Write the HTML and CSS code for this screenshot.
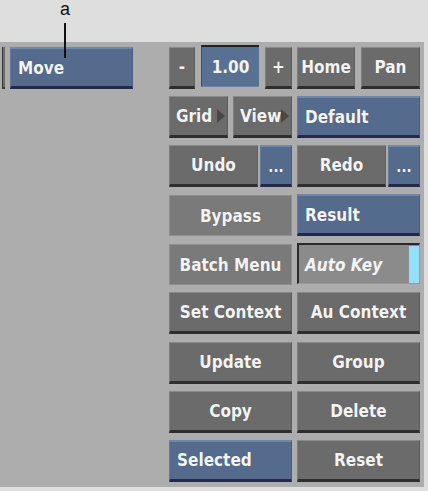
FILE: index.html
```html
<!DOCTYPE html>
<html>
<head>
<meta charset="utf-8">
<link rel="stylesheet" href="styles.css">
</head>
<body>
<div class="page">
  <div class="top">
    <span class="callout-label">a</span>
    <span class="callout-line"></span>
  </div>
  <div class="panel">
    <div class="left">
      <div class="stub"></div>
      <div class="btn blue left-text move">Move</div>
    </div>
    <div class="grid">
      <div class="row">
        <div class="half">
          <div class="btn gray w26">-</div>
          <div class="field w58">1.00</div>
          <div class="btn gray w27">+</div>
        </div>
        <div class="half">
          <div class="btn gray w58">Home</div>
          <div class="btn gray w59">Pan</div>
        </div>
      </div>
      <div class="row">
        <div class="half g5">
          <div class="btn gray w59 menu"><span>Grid</span><i class="arrow"></i></div>
          <div class="btn gray w59 menu"><span>View</span><i class="arrow"></i></div>
        </div>
        <div class="btn blue left-text">Default</div>
      </div>
      <div class="row">
        <div class="half g2">
          <div class="btn gray grow">Undo</div>
          <div class="btn blue w32 dots">...</div>
        </div>
        <div class="half g2">
          <div class="btn gray grow">Redo</div>
          <div class="btn blue w32 dots">...</div>
        </div>
      </div>
      <div class="row">
        <div class="btn flat">Bypass</div>
        <div class="btn blue left-text">Result</div>
      </div>
      <div class="row">
        <div class="btn flat">Batch Menu</div>
        <div class="autokey"><span>Auto Key</span><i class="cyan"></i></div>
      </div>
      <div class="row">
        <div class="btn gray">Set Context</div>
        <div class="btn gray">Au Context</div>
      </div>
      <div class="row">
        <div class="btn gray">Update</div>
        <div class="btn gray">Group</div>
      </div>
      <div class="row">
        <div class="btn gray">Copy</div>
        <div class="btn gray">Delete</div>
      </div>
      <div class="row">
        <div class="btn blue left-text">Selected</div>
        <div class="btn gray">Reset</div>
      </div>
    </div>
  </div>
</div>
</body>
</html>
```

FILE: styles.css
```css
html, body {
  margin: 0;
  padding: 0;
  background: #dedede;
}
.page {
  width: 428px;
  height: 491px;
  background: #dedede;
  font-family: "DejaVu Sans Condensed", "DejaVu Sans", "Liberation Sans", sans-serif;
  font-stretch: condensed;
}
.top {
  position: relative;
  height: 42px;
}
.callout-label {
  position: absolute;
  left: 60px;
  top: -1px;
  font-family: "Liberation Sans", Arial, sans-serif;
  font-stretch: normal;
  font-size: 18px;
  color: #111;
}
.callout-line {
  position: absolute;
  left: 64px;
  top: 23px;
  width: 2px;
  height: 35px;
  background: #111;
  z-index: 2;
}
.panel {
  width: 424px;
  height: 445px;
  background: #adadad;
  box-sizing: border-box;
  padding: 5px 4px 0 2px;
  display: flex;
  gap: 36px;
}
.left {
  display: flex;
  gap: 5px;
  align-items: flex-start;
}
.stub {
  width: 2px;
  height: 40px;
  background: #6c6c6c;
  border-left: 1px solid #3a3a3a;
  border-bottom: 2px solid #3a3a3a;
}
.move {
  width: 123px;
  height: 43px;
}
.grid {
  display: flex;
  flex-direction: column;
  gap: 7.1px;
  width: 251px;
}
.row {
  display: grid;
  grid-template-columns: 123px 123px;
  gap: 5px;
  height: 42px;
}
.half {
  display: flex;
  gap: 6px;
}
.half.g5 { gap: 5px; }
.half.g2 { gap: 2px; }
.btn {
  box-sizing: border-box;
  height: 42px;
  display: flex;
  align-items: center;
  justify-content: center;
  color: #f4f4f4;
  font-weight: bold;
  font-size: 17px;
  white-space: nowrap;
  text-shadow: 0 0 1px rgba(0,0,0,0.25);
}
.gray {
  background: #6b6b6b;
  border-top: 1px solid #8a8a8a;
  border-left: 1px solid #7c7c7c;
  border-right: 1px solid #5e5e5e;
  border-bottom: 3px solid #2e2e2e;
}
.blue {
  background: #546b8d;
  border-top: 2px solid #6f87a8;
  border-left: 1px solid #62799b;
  border-right: 1px solid #4a5f80;
  border-bottom: 3px solid #24284a;
}
.flat {
  background: #7a7a7a;
  border: 1px solid #8f8f8f;
  height: 41px;
  margin-top: 1px;
}
.left-text {
  justify-content: flex-start;
  padding-left: 7px;
}
.field {
  box-sizing: border-box;
  height: 42px;
  margin-top: -2px;
  background: #587092;
  border-top: 2px solid #222;
  border-left: 1px solid #3d4d66;
  border-bottom: 1px solid #6d84a4;
  display: flex;
  align-items: center;
  justify-content: center;
  color: #f4f4f4;
  font-weight: bold;
  font-size: 17px;
}
.w26 { width: 26px; }
.w27 { width: 27px; }
.w32 { width: 32px; }
.w58 { width: 58px; }
.w59 { width: 59px; }
.grow { flex: 1; }
.dots {
  align-items: flex-end;
  padding-bottom: 8px;
  font-size: 15px;
}
.menu {
  justify-content: space-between;
  padding-left: 6px;
  padding-right: 2px;
}
.arrow {
  width: 0;
  height: 0;
  border-top: 7px solid transparent;
  border-bottom: 7px solid transparent;
  border-left: 8px solid #474747;
}
.autokey {
  box-sizing: border-box;
  height: 41px;
  background: #8b8b8b;
  border-top: 2px solid #2a2a2a;
  border-left: 2px solid #2a2a2a;
  border-right: 1px solid #9a9a9a;
  border-bottom: 1px solid #9a9a9a;
  display: flex;
  align-items: center;
  justify-content: space-between;
  padding-left: 6px;
  padding-top: 1px;
  color: #f4f4f4;
  font-weight: bold;
  font-style: italic;
  font-size: 17px;
}
.cyan {
  width: 10px;
  height: 37px;
  align-self: flex-end;
  background: #92e0fb;
}
```
